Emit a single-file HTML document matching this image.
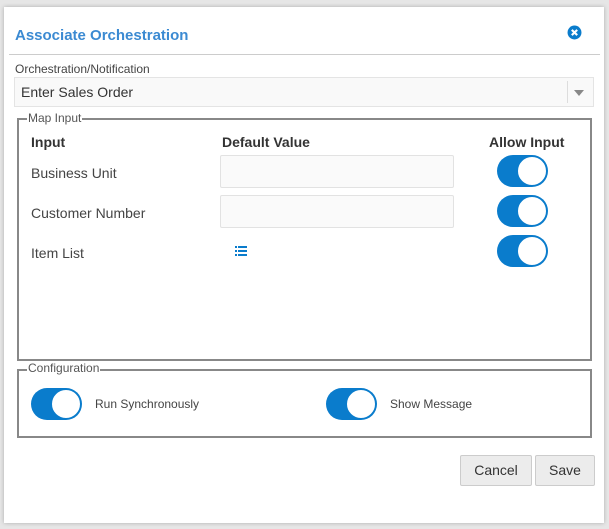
<!DOCTYPE html><html><head><style>
body{margin:0;width:609px;height:529px;background:#e6e6e6;font-family:"Liberation Sans",sans-serif;position:relative;overflow:hidden;color:#333}
.a{position:absolute}
.dlg{left:4px;top:7px;width:600px;height:516px;background:#fff;box-shadow:0 0 4px rgba(0,0,0,.25)}
.tg{position:absolute;width:51px;height:32px;border-radius:16px;background:#0a7ccc}
.tg:after{content:"";position:absolute;right:1px;top:1px;width:30px;height:30px;border-radius:50%;background:#fff;border:1px solid #0a7ccc;box-sizing:border-box;top:1px}
.in{position:absolute;width:232px;height:31px;background:#fafafa;border:1px solid #e2e2e2;border-radius:2px}
.fs{position:absolute;border:2px solid #888;box-sizing:border-box}
.lg{position:absolute;background:#fff;font-size:12px;color:#555;padding:0 1px;line-height:13px}
.btn{position:absolute;background:#ececec;border:1px solid #ccc;border-radius:2px;font-size:14px;text-align:center;line-height:29px;color:#333;box-sizing:border-box;height:31px}
</style></head><body>
<div class="a dlg"></div>
<div class="a" style="left:15px;top:27px;font-size:15px;font-weight:bold;color:#3b8ad2">Associate Orchestration</div>
<svg class="a" style="left:567px;top:25px" width="15" height="15" viewBox="0 0 14 14"><circle cx="7" cy="7" r="6.5" fill="#0a7ccc"/><path d="M4.5 4.5L9.5 9.5M9.5 4.5L4.5 9.5" stroke="#fff" stroke-width="2"/></svg>
<div class="a" style="left:9px;top:54px;width:591px;height:1px;background:#ccc"></div>
<div class="a" style="left:15px;top:62px;font-size:12px;color:#444">Orchestration/Notification</div>
<div class="a" style="left:14px;top:77px;width:580px;height:30px;background:#f9f9f9;border:1px solid #e4e4e4;box-sizing:border-box"></div>
<div class="a" style="left:21px;top:84px;font-size:14px;color:#333">Enter Sales Order</div>
<div class="a" style="left:567px;top:81px;width:1px;height:22px;background:#ddd"></div>
<div class="a" style="left:574px;top:90px;width:0;height:0;border-left:5px solid transparent;border-right:5px solid transparent;border-top:6px solid #888"></div>
<div class="fs" style="left:17px;top:118px;width:575px;height:243px"></div>
<div class="lg" style="left:27px;top:112px">Map Input</div>
<div class="a" style="left:31px;top:134px;font-size:14px;font-weight:bold">Input</div>
<div class="a" style="left:222px;top:134px;font-size:14px;font-weight:bold">Default Value</div>
<div class="a" style="left:489px;top:134px;font-size:14px;font-weight:bold">Allow Input</div>
<div class="a" style="left:31px;top:165px;font-size:14px;color:#444">Business Unit</div>
<div class="a" style="left:31px;top:205px;font-size:14px;color:#444">Customer Number</div>
<div class="a" style="left:31px;top:245px;font-size:14px;color:#444">Item List</div>
<div class="in" style="left:220px;top:155px"></div>
<div class="in" style="left:220px;top:195px"></div>
<svg class="a" style="left:235px;top:246px" width="12" height="10" viewBox="0 0 12 10"><g fill="#0a7ccc"><rect x="0" y="0" width="2" height="2"/><rect x="3" y="0" width="9" height="2"/><rect x="0" y="4" width="2" height="2"/><rect x="3" y="4" width="9" height="2"/><rect x="0" y="8" width="2" height="2"/><rect x="3" y="8" width="9" height="2"/></g></svg>
<div class="tg" style="left:497px;top:155px"></div>
<div class="tg" style="left:497px;top:195px"></div>
<div class="tg" style="left:497px;top:235px"></div>
<div class="fs" style="left:17px;top:369px;width:575px;height:69px"></div>
<div class="lg" style="left:27px;top:362px">Configuration</div>
<div class="tg" style="left:31px;top:388px"></div>
<div class="a" style="left:95px;top:397px;font-size:12px;color:#444">Run Synchronously</div>
<div class="tg" style="left:326px;top:388px"></div>
<div class="a" style="left:390px;top:397px;font-size:12px;color:#444">Show Message</div>
<div class="btn" style="left:460px;top:455px;width:72px">Cancel</div>
<div class="btn" style="left:535px;top:455px;width:60px">Save</div>
</body></html>
